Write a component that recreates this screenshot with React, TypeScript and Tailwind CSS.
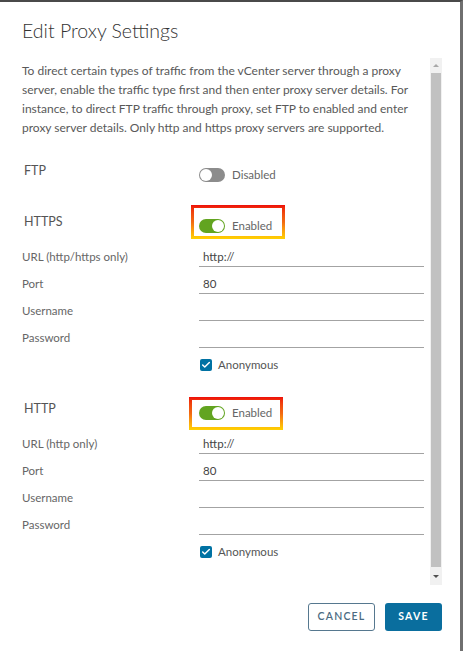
import { Check } from "lucide-react";

const font = { fontFamily: "Lato, 'Open Sans', sans-serif" };

function Toggle({ on }: { on: boolean }) {
  return (
    <span
      className={
        "relative inline-block h-[14px] w-[26px] rounded-full " +
        (on ? "bg-[#62a420]" : "bg-[#8c8c8c]")
      }
    >
      <span
        className={
          "absolute top-[1px] h-[12px] w-[12px] rounded-full bg-white " +
          (on ? "right-[1px]" : "left-[1px]")
        }
      />
    </span>
  );
}

// annotation frame drawn over the toggle (red -> yellow)
function Highlight({ className }: { className: string }) {
  return (
    <div
      className={
        "pointer-events-none absolute bg-linear-to-b from-[#ee0a0a] via-[#f26a12] to-[#ffd200] p-[3px] " +
        className
      }
    >
      <div className="h-full w-full bg-white" />
    </div>
  );
}

function Field({ label, value }: { label: string; value?: string }) {
  return (
    <div className="grid h-[27px] grid-cols-[177px_225px]">
      <div className="text-[11.5px] leading-[20px] text-[#666]">{label}</div>
      <div className="h-[20px] border-b border-[#a3a3a3] pl-1 text-[11.5px] leading-[20px] text-[#444]">
        {value}
      </div>
    </div>
  );
}

function Anonymous() {
  return (
    <div className="grid h-[20px] grid-cols-[177px_225px] items-center">
      <div />
      <label className="flex items-center gap-[6px] pl-[1px] text-[11.5px] text-[#555]">
        <span className="flex h-[12px] w-[12px] items-center justify-center rounded-[2px] bg-[#0072a3]">
          <Check className="h-[10px] w-[10px] text-white" strokeWidth={3.5} />
        </span>
        Anonymous
      </label>
    </div>
  );
}

function Section({
  name,
  enabled,
  frame,
  urlLabel,
}: {
  name: string;
  enabled: boolean;
  frame?: string;
  urlLabel?: string;
}) {
  return (
    <div>
      <div className="grid h-[35px] grid-cols-[177px_225px]">
        <div className="pl-[2px] text-[12.5px] leading-[20px] text-[#555]">{name}</div>
        <div className="relative pt-[7px]">
          {frame && <Highlight className={frame} />}
          <div className="relative flex items-center gap-[7px]">
            <Toggle on={enabled} />
            <span className="text-[11.5px] leading-[14px] text-[#666]">
              {enabled ? "Enabled" : "Disabled"}
            </span>
          </div>
        </div>
      </div>
      {urlLabel && (
        <>
          <Field label={urlLabel} value="http://" />
          <Field label="Port" value="80" />
          <Field label="Username" />
          <Field label="Password" />
          <Anonymous />
        </>
      )}
    </div>
  );
}

function Scrollbar() {
  return (
    <div className="flex w-[12px] flex-col bg-[#f1f1f1]">
      <div className="flex h-[15px] items-center justify-center">
        <span className="border-x-[3px] border-b-[3px] border-x-transparent border-b-[#a8a8a8]" />
      </div>
      <div className="mx-[1px] flex-1 bg-[#c1c1c1]" />
      <div className="flex h-[18px] items-center justify-center">
        <span className="border-x-[3px] border-t-[3px] border-x-transparent border-t-[#505050]" />
      </div>
    </div>
  );
}

export default function App() {
  return (
    <div
      className="flex h-[651px] w-[463px] flex-col border-t-2 border-r-[3px] border-t-[#4a4a4a] border-r-[#6f6f6f] bg-white"
      style={font}
    >
      <h1 className="pl-[22px] pt-[17px] text-[19.5px] font-light leading-[24px] text-[#333]">
        Edit Proxy Settings
      </h1>

      <div className="mt-[15px] flex h-[527px] pr-[18px]">
        <div className="flex-1 pl-[22px] pt-[3px]">
          <p className="w-[404px] text-[12px] leading-[19px] text-[#595959]">
            To direct certain types of traffic from the vCenter server through a proxy
            <br />
            server, enable the traffic type first and then enter proxy server details. For
            <br />
            instance, to direct FTP traffic through proxy, set FTP to enabled and enter
            <br />
            proxy server details. Only http and https proxy servers are supported.
          </p>

          <div className="mt-[24px]">
            <div className="h-[51px]">
              <Section name="FTP" enabled={false} />
            </div>
            <Section
              name="HTTPS"
              enabled
              frame="-left-[8px] -top-[7px] h-[34px] w-[94px]"
              urlLabel="URL (http/https only)"
            />
            <div className="h-[24px]" />
            <Section
              name="HTTP"
              enabled
              frame="-left-[10px] -top-[2px] h-[33px] w-[94px]"
              urlLabel="URL (http only)"
            />
          </div>
        </div>
        <Scrollbar />
      </div>

      <div className="flex justify-end gap-[10px] pr-[18px] pt-[18px]">
        <button className="h-[28px] w-[67px] rounded-[3px] border border-[#56788f] text-[10.5px] font-semibold tracking-[1.2px] text-[#4b6b82]">
          CANCEL
        </button>
        <button className="h-[28px] w-[57px] rounded-[3px] bg-[#0a6e9e] text-[10.5px] font-bold tracking-[1.2px] text-white">
          SAVE
        </button>
      </div>
    </div>
  );
}
